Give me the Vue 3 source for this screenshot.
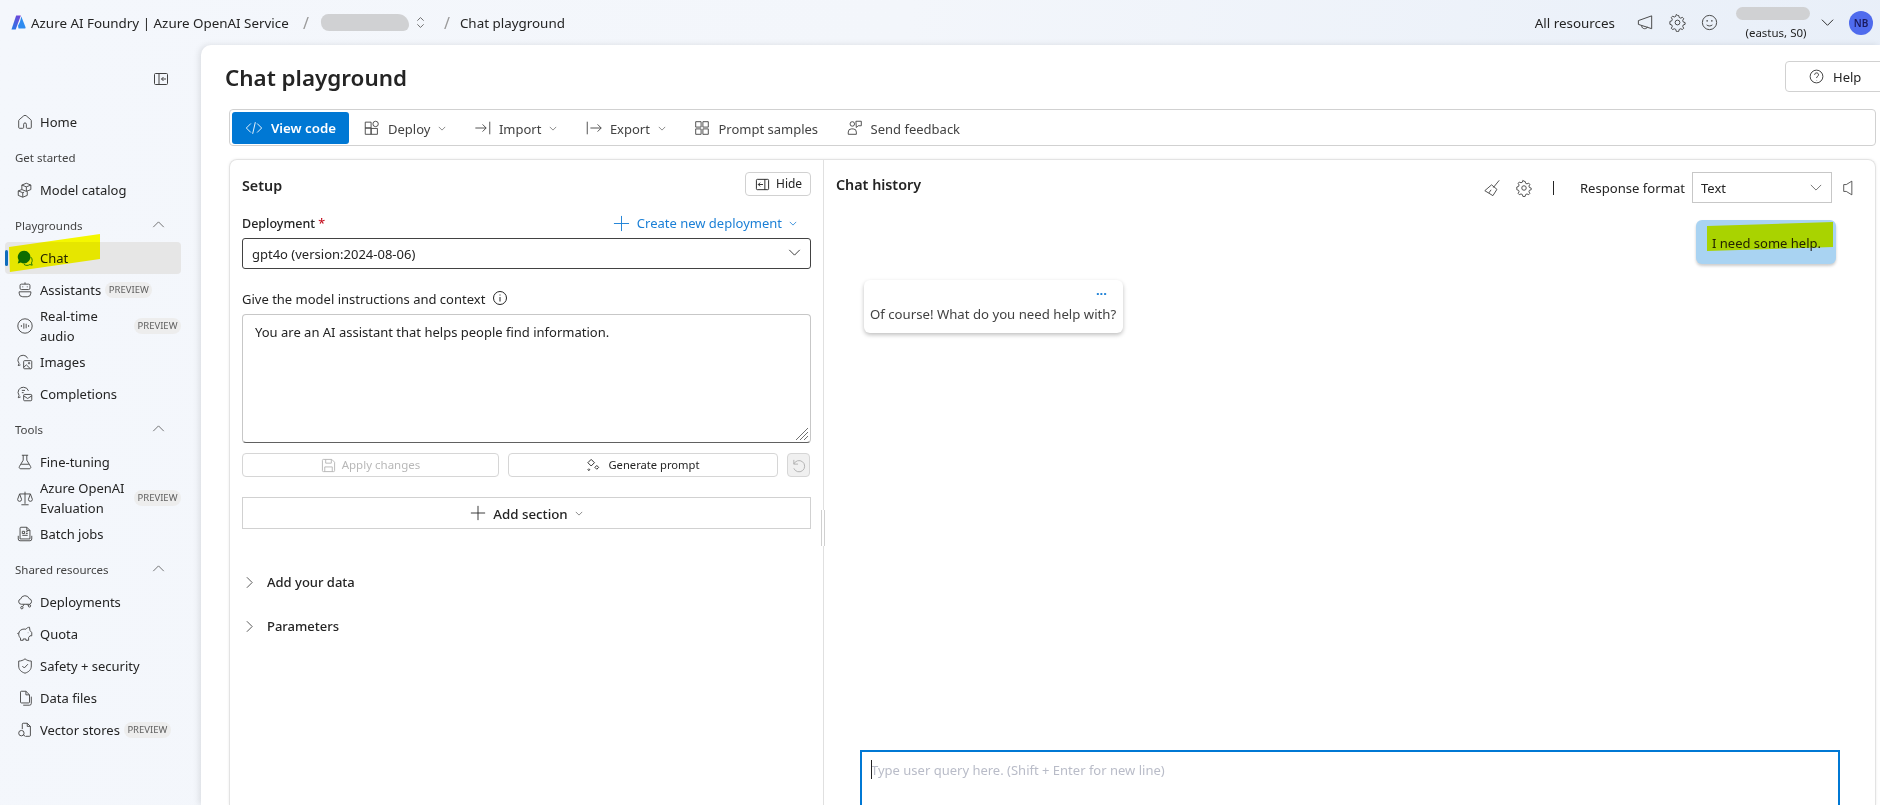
<script setup>
const icons = {
  home: ['M8.5 3.2a2.3 2.3 0 0 1 3 0l5 4.3c.3.3.5.7.5 1.1V16a1 1 0 0 1-1 1h-3.5a1 1 0 0 1-1-1v-3.5a1.5 1.5 0 0 0-3 0V16a1 1 0 0 1-1 1H4a1 1 0 0 1-1-1V8.6c0-.4.2-.8.5-1.1z'],
  catalog: ['M11.5 2.5l5 2v5l-5 2-5-2v-5z', 'M6.5 4.5l5 2 5-2', 'M11.5 6.5v5', 'M6.5 9.5l-4 1.5v5l5 2 5-2v-4.5', 'M2.5 11l5 2 1.5-.6', 'M7.5 13v5'],
  assistant: ['M6 3.5h8A1.5 1.5 0 0 1 15.5 5v3A1.5 1.5 0 0 1 14 9.5H6A1.5 1.5 0 0 1 4.5 8V5A1.5 1.5 0 0 1 6 3.5z', 'M10 1.5v2', 'M7.5 6v1', 'M12.5 6v1', 'M3.5 12h13v1.5a4 4 0 0 1-4 4h-5a4 4 0 0 1-4-4z'],
  audio: ['M10 2a8 8 0 1 0 0 16a8 8 0 0 0 0-16z', 'M6 9v2', 'M8.700 7v6', 'M11.300 7.500v5', 'M14 9v2'],
  images: ['M3.4 11.5A5.5 5.5 0 0 1 8 2.5a5.5 5.5 0 0 1 5 3.5', 'M3.4 11.5l-.9 2.5 2.5-.8', 'M9.5 8.5h7a1 1 0 0 1 1 1v7a1 1 0 0 1-1 1h-7a1 1 0 0 1-1-1v-7a1 1 0 0 1 1-1z', 'M14.5 10.5a.8.8 0 1 0 0 1.6a.8.8 0 1 0 0-1.6z', 'M8.5 16l3-2.8 4.5 4.3'],
  completions: ['M3.4 11.5A5.7 5.7 0 0 1 8.5 2.5a5.7 5.7 0 0 1 5.3 4', 'M3.4 11.5l-.9 2.6 2.6-.8', 'M6.5 6h3.5M6.5 8.5h2', 'M9.5 10.5h7a1 1 0 0 1 1 1v5a1 1 0 0 1-1 1h-7a1 1 0 0 1-1-1v-5a1 1 0 0 1 1-1z', 'M8.5 12l4.5 3 4.5-3'],
  flask: ['M6.5 2.5h7', 'M8 2.5v5.5l-4.200 7a1.600 1.600 0 0 0 1.400 2.500h9.600a1.600 1.600 0 0 0 1.400-2.500L12 8V2.500', 'M5.700 12.500h8.600'],
  scale: ['M10 3v13.500', 'M6 17.500h8', 'M4 5.500h12', 'M4 5.500l-2.200 6a2.200 2.200 0 0 0 4.400 0z', 'M16 5.500l-2.200 6a2.200 2.200 0 0 0 4.400 0z'],
  batch: ['M5.500 2.500h6.500l3.500 3.500v9.500h-11V3.500a1 1 0 0 1 1-1z', 'M12 2.500V6h3.500', 'M7 7h2.500v2.500H7z', 'M7 11.500h6M11 7.500h2M11 9.500h2', 'M2.500 12v3.500a2 2 0 0 0 2 2h11a2 2 0 0 0 2-2V12'],
  deploy: ['M6 12.500a3 3 0 0 1-.8-5.900a5 5 0 0 1 9.500-.3a3.200 3.200 0 0 1 .3 6.200z', 'M9 12.500l-1.500 2.500', 'M12 12.500l1.500 1.500', 'M6.500 15a1.300 1.300 0 1 0 0 2.600a1.300 1.300 0 1 0 0-2.600z', 'M15 13a1.300 1.300 0 1 0 0 2.600a1.300 1.300 0 1 0 0-2.600z'],
  piggy: ['M3 10c0-3.500 3-5.500 6-5.500l2 .2c1-1.500 2.500-2.200 4-2.200l.5 3.500 2 2.500v3.500h-2l-1.500 2V17h-3v-1.500H8V17H5v-2.500C3.800 13.500 3 12 3 10z', 'M13.500 8.500v.5', 'M1.500 10l1.500-1.500'],
  shield: ['M10 2c2 1.700 4.300 2.500 7 2.500V10c0 4-2.500 6.500-7 8c-4.500-1.500-7-4-7-8V4.500c2.700 0 5-.8 7-2.500z', 'M7 10l2.200 2.200 4-4.200'],
  file: ['M6 2.500h5l4 4V14.500a1 1 0 0 1-1 1H6a1 1 0 0 1-1-1V3.500a1 1 0 0 1 1-1z', 'M11 2.500v4h4', 'M17 8.500v7.500a2 2 0 0 1-2 2H8'],
  vector: ['M7 9V3.500a1 1 0 0 1 1-1h4.500L16 6v10a1 1 0 0 1-1 1h-4', 'M12.500 2.500V6H16', 'M6 10.500a3 3 0 1 0 0 6a3 3 0 1 0 0-6z', 'M8.200 15l2.300 2.500']
}

const groups = [
  { items: [{ label: 'Home', icon: 'home' }] },
  { head: 'Get started', items: [{ label: 'Model catalog', icon: 'catalog' }] },
  {
    head: 'Playgrounds', toggle: true,
    items: [
      { label: 'Chat', chat: true, active: true },
      { label: 'Assistants', icon: 'assistant', badge: true },
      { label: 'Real-time\naudio', icon: 'audio', badge: true, wrap: true },
      { label: 'Images', icon: 'images' },
      { label: 'Completions', icon: 'completions' }
    ]
  },
  {
    head: 'Tools', toggle: true,
    items: [
      { label: 'Fine-tuning', icon: 'flask' },
      { label: 'Azure OpenAI\nEvaluation', icon: 'scale', badge: true, wrap: true },
      { label: 'Batch jobs', icon: 'batch' }
    ]
  },
  {
    head: 'Shared resources', toggle: true,
    items: [
      { label: 'Deployments', icon: 'deploy' },
      { label: 'Quota', icon: 'piggy' },
      { label: 'Safety + security', icon: 'shield' },
      { label: 'Data files', icon: 'file' },
      { label: 'Vector stores', icon: 'vector', badge: true }
    ]
  }
]

const tools = [
  { label: 'Deploy', menu: true, d: ['M2.500 3.500h6.500v6.500H2.500z', 'M2.500 10h6.500v7H2.500z', 'M9 10.500h7v6.500H9z', 'M14 2.500a3 3 0 1 0 0 6a3 3 0 0 0 0-6z'] },
  { label: 'Import', menu: true, d: ['M1.500 10h12', 'M9.500 6l4 4-4 4', 'M17.500 3v14'] },
  { label: 'Export', menu: true, d: ['M2.500 3v14', 'M6 10h12', 'M14 6l4 4-4 4'] },
  { label: 'Prompt samples', d: ['M3 3h6v6H3z', 'M11 3h6v6h-6z', 'M3 11h6v6H3z', 'M11 11h6v6h-6z'] },
  { label: 'Send feedback', d: ['M7 8a2.500 2.500 0 1 0 0-5a2.500 2.500 0 0 0 0 5z', 'M2.500 17v-2.500A3.500 3.500 0 0 1 6 11h2a3.500 3.500 0 0 1 3.500 3.500V17z', 'M11 2.500h6v5h-3.500L11.500 9.500z'] }
]

const gear = 'M10 2.500l1.300.2.500 2 1.500.7 1.900-.8 1.300 1.400-1 1.800.5 1.600 2 .7v1.800l-2 .7-.5 1.600 1 1.800-1.300 1.400-1.900-.8-1.500.7-.5 2-1.300.2-1.300-.2-.5-2-1.500-.7-1.900.8-1.300-1.400 1-1.800-.5-1.600-2-.7V8.900l2-.7.500-1.600-1-1.800 1.300-1.400 1.900.8 1.500-.7.500-2z'
</script>

<template>
  <div class="shell">
    <header class="top">
      <svg class="logo" viewBox="0 0 16 18">
        <defs>
          <linearGradient id="lg" x1="0" y1="1" x2="1" y2="0">
            <stop offset="0" stop-color="#1f7fe8" />
            <stop offset="1" stop-color="#7a3fd6" />
          </linearGradient>
        </defs>
        <path d="M5.500 1.500h5L5 16.500H.5z" fill="url(#lg)" />
        <path d="M11 2.500l4.500 11.500c.2.700-.2 1.500-1 1.500H8l-.5-3 2-4z" fill="#2e8bf0" />
      </svg>
      <span class="brand">Azure AI Foundry | Azure OpenAI Service</span>
      <span class="slash first">/</span>
      <span class="blob"></span>
      <svg class="updown" viewBox="0 0 10 16"><path d="M1.500 6L5 2.500 8.500 6M1.500 10L5 13.500 8.500 10" /></svg>
      <span class="slash second">/</span>
      <span class="crumb">Chat playground</span>
      <span class="all">All resources</span>
      <svg class="topic mega" viewBox="0 0 20 20"><path d="M2.500 8l14-5v13.500L2.500 12z" /><path d="M6 13.500c0 2 1.500 3 3 3s2.500-.5 3-2" /></svg>
      <svg class="topic" viewBox="0 0 20 20"><path :d="gear" /><path d="M10 7.500a2.500 2.500 0 1 0 0 5a2.500 2.500 0 0 0 0-5z" /></svg>
      <svg class="topic" viewBox="0 0 20 20"><path d="M10 2.500a7.500 7.500 0 1 0 0 15a7.500 7.500 0 0 0 0-15z" /><path d="M7 12.500c1.500 1.500 4.500 1.500 6 0" /><path d="M7.500 8v.5M12.500 8v.5" stroke-linecap="round" stroke-width="1.500" /></svg>
      <div class="account">
        <span class="acc-blob"></span>
        <span class="acc-sub">(eastus, S0)</span>
      </div>
      <svg class="acc-chev" viewBox="0 0 16 16"><path d="M2 5l6 6 6-6" /></svg>
      <span class="avatar">NB</span>
    </header>

    <div class="body">
      <nav class="side">
        <div class="collapse-row">
          <svg class="collapse" viewBox="0 0 16 16"><path d="M2.500 2.500h11a1 1 0 0 1 1 1v9a1 1 0 0 1-1 1h-11a1 1 0 0 1-1-1v-9a1 1 0 0 1 1-1z" /><path d="M6 2.500v11" /><path d="M13 8H8.500M10.500 6L8.500 8l2 2" /></svg>
        </div>
        <section v-for="(g, gi) in groups" :key="gi">
          <div v-if="g.head" class="head">
            <span>{{ g.head }}</span>
            <svg v-if="g.toggle" class="head-chev" viewBox="0 0 14 8"><path d="M1 7l6-6 6 6" /></svg>
          </div>
          <div v-for="it in g.items" :key="it.label" class="row" :class="{ active: it.active, tall: it.wrap }">
            <span v-if="it.active" class="mark"></span>
            <svg v-if="it.chat" class="nav-ic" viewBox="0 0 20 20">
              <path class="chat-fill" d="M9 2a7 7 0 0 0-6 10.600L2 16l3.400-1A7 7 0 1 0 9 2z" />
              <path class="chat-line" d="M16.500 9c1 1 1.500 2.300 1.500 3.700 0 1-.3 2-.8 2.800l.8 2.500-2.600-.7c-1 .6-2 .9-3.200.9-1.300 0-2.500-.4-3.400-1.200" />
            </svg>
            <svg v-else class="nav-ic" viewBox="0 0 20 20"><path v-for="d in icons[it.icon]" :key="d" :d="d" /></svg>
            <span class="label" :class="{ grow: it.wrap }">{{ it.label }}</span>
            <span v-if="it.badge" class="badge">PREVIEW</span>
            <span v-if="it.active" class="mark-yellow"></span>
          </div>
        </section>
      </nav>

      <main class="main">
        <div class="title-row">
          <h1>Chat playground</h1>
          <button class="help">
            <svg viewBox="0 0 20 20"><path d="M10 2.500a7.500 7.500 0 1 0 0 15a7.500 7.500 0 0 0 0-15z" /><path d="M7.800 8c0-3 4.600-3 4.600 0 0 1.700-2.300 1.800-2.300 3.800" /><path d="M10.100 14v.5" stroke-width="1.500" /></svg>
            <span class="nudge">Help</span>
          </button>
        </div>

        <div class="toolbar">
          <button class="primary">
            <svg viewBox="0 0 20 20"><path d="M6.500 5L1.500 10l5 5" /><path d="M13.500 5l5 5-5 5" /><path d="M11.500 3.500l-3 13" /></svg>
            <span class="nudge">View code</span>
          </button>
          <div v-for="t in tools" :key="t.label" class="tool">
            <svg class="tool-ic" viewBox="0 0 20 20"><path v-for="d in t.d" :key="d" :d="d" /></svg>
            <span class="nudge">{{ t.label }}</span>
            <svg v-if="t.menu" class="mini" viewBox="0 0 10 6"><path d="M1 1l4 4 4-4" /></svg>
          </div>
        </div>

        <div class="card">
          <section class="setup">
            <div class="setup-head">
              <h2>Setup</h2>
              <button class="hide">
                <svg viewBox="0 0 16 16"><path d="M2.500 2.500h11a1 1 0 0 1 1 1v9a1 1 0 0 1-1 1h-11a1 1 0 0 1-1-1v-9a1 1 0 0 1 1-1z" /><path d="M10.500 2.500v11" /><path d="M8.500 8H3.500M5.500 6L3.500 8l2 2" /></svg>
                <span>Hide</span>
              </button>
            </div>

            <div class="dep-row">
              <label class="dep-label nudge">Deployment <em>*</em></label>
              <div class="create">
                <svg class="create-plus" viewBox="0 0 18 18"><path d="M9 1v16M1 9h16" /></svg>
                <span>Create new deployment</span>
                <svg class="mini" viewBox="0 0 10 6"><path d="M1 1l4 4 4-4" /></svg>
              </div>
            </div>
            <div class="select">
              <span>gpt4o (version:2024-08-06)</span>
              <svg viewBox="0 0 14 8"><path d="M1 1l6 6 6-6" /></svg>
            </div>

            <div class="give">
              <span>Give the model instructions and context</span>
              <svg viewBox="0 0 16 16"><path d="M8 1.500a6.500 6.500 0 1 0 0 13a6.500 6.500 0 0 0 0-13z" /><path d="M8 7v4.500M8 4.500v1" /></svg>
            </div>
            <div class="prompt">
              <span>You are an AI assistant that helps people find information.</span>
              <svg class="grip" viewBox="0 0 14 14"><path d="M1 13L13 1M5 13l8-8M9 13l4-4" /></svg>
            </div>

            <div class="actions">
              <button class="apply">
                <svg viewBox="0 0 16 16"><path d="M2.500 1.500h9l3 3v9a1 1 0 0 1-1 1h-11a1 1 0 0 1-1-1v-11a1 1 0 0 1 1-1z" /><path d="M5 1.500v4h6v-4M4 14.500V9.500h8v5" /></svg>
                <span>Apply changes</span>
              </button>
              <button class="generate">
                <svg viewBox="0 0 16 16"><path d="M5.500 1.500l3.500 3.500-3.500 3.500L2 5z" /><path d="M11.500 8l2 2-2 2-2-2z" /><path d="M3 11.500l1 1-1 1-1-1z" /></svg>
                <span>Generate prompt</span>
              </button>
              <button class="undo">
                <svg viewBox="0 0 16 16"><path d="M3 2v4.500h4.500" /><path d="M3 6.500A6 6 0 1 1 3 11" /></svg>
              </button>
            </div>

            <button class="add">
              <svg class="add-plus" viewBox="0 0 18 18"><path d="M9 1v16M1 9h16" /></svg>
              <span>Add section</span>
              <svg class="mini" viewBox="0 0 10 6"><path d="M1 1l4 4 4-4" /></svg>
            </button>

            <div class="fold first-fold">
              <svg viewBox="0 0 8 14"><path d="M1 1l6 6-6 6" /></svg>
              <span>Add your data</span>
            </div>
            <div class="fold">
              <svg viewBox="0 0 8 14"><path d="M1 1l6 6-6 6" /></svg>
              <span>Parameters</span>
            </div>
            <span class="splitter"></span>
          </section>

          <section class="chat">
            <div class="chat-head">
              <h2>Chat history</h2>
              <svg class="head-ic broom" viewBox="0 0 20 20"><path d="M18 1.500l-6.500 8" /><path d="M9.500 6.500l6 5-4.500 7L2 13z" /><path d="M6.500 15.500l2.500-3.500" /></svg>
              <svg class="head-ic" viewBox="0 0 20 20"><path :d="gear" /><path d="M10 7.500a2.500 2.500 0 1 0 0 5a2.500 2.500 0 0 0 0-5z" /></svg>
              <span class="vbar"></span>
              <span class="rf nudge">Response format</span>
              <div class="fmt">
                <span class="nudge">Text</span>
                <svg viewBox="0 0 14 8"><path d="M1 1l6 6 6-6" /></svg>
              </div>
              <svg class="head-ic speaker" viewBox="0 0 14 20"><path d="M11.500 2v16L5 14H2V6h3z" /></svg>
            </div>

            <div class="user-msg">
              <span>I need some help.</span>
              <span class="mark-green"></span>
            </div>
            <div class="bot-msg">
              <span class="dots">...</span>
              <span>Of course! What do you need help with?</span>
            </div>

            <div class="input">
              <span class="caret"></span>
              <span class="ph">Type user query here. (Shift + Enter for new line)</span>
            </div>
          </section>
        </div>
      </main>
    </div>
  </div>
</template>

<style>
html, body { margin: 0; overflow: hidden; }
</style>

<style scoped>
.shell {
  width: 1880px;
  height: 805px;
  overflow: hidden;
  display: flex;
  flex-direction: column;
  color: #242424;
  font: 13px/20px "Noto Sans", "Open Sans", sans-serif;
  background: linear-gradient(100deg, #f4f7fc 0%, #f3f6fb 45%, #e7eef8 100%);
}
button { font: inherit; color: inherit; background: #fff; cursor: pointer; padding: 0; }
svg { fill: none; stroke: currentColor; stroke-width: 1; display: block; flex: none; }
h1, h2 { margin: 0; }
.nudge { margin-top: 1px; }

.top { height: 45px; flex: none; display: flex; align-items: center; font-size: 13.400px; }
.logo { width: 15px; height: 17px; margin-left: 11px; stroke: none; }
.logo path { stroke: none; }
.brand { margin-left: 5px; width: 258px; white-space: nowrap; }
.slash { color: #9a9a9a; font-size: 16px; }
.slash.first { margin-left: 14px; }
.blob { width: 88px; height: 17px; margin-left: 12px; border-radius: 9px 14px 7px 10px; background: #d0d1d3; }
.updown { width: 9px; height: 15px; margin-left: 7px; color: #616161; }
.slash.second { margin-left: 19px; }
.crumb { margin-left: 10px; white-space: nowrap; }
.all { margin-left: auto; white-space: nowrap; }
.topic { width: 19px; height: 19px; margin-left: 13px; color: #424242; }
.topic.mega { margin-left: 21px; }
.account { width: 80px; margin-left: 14px; display: flex; flex-direction: column; align-items: center; height: 36px; justify-content: flex-start; }
.acc-blob { width: 74px; height: 14px; border-radius: 7px; background: #d0d1d3; margin-top: 2px; }
.acc-sub { font-size: 11.500px; line-height: 16px; margin-top: 5px; white-space: nowrap; margin-left: 6px; }
.acc-chev { width: 15px; height: 15px; margin-left: 7px; color: #242424; }
.avatar { width: 24px; height: 24px; border-radius: 50%; margin-left: 14px; margin-right: 7px; background: #4f6bed; color: #1a1a5e; font-size: 10px; font-weight: 600; display: flex; align-items: center; justify-content: center; }

.body { flex: 1; min-height: 0; display: flex; }
.side { width: 201px; flex: none; }
.collapse-row { height: 61px; display: flex; justify-content: flex-end; align-items: flex-end; padding-right: 32px; box-sizing: border-box; }
.collapse { width: 16px; height: 16px; margin-bottom: 19px; color: #424242; }
.head { height: 36px; padding: 4px 36px 0 15px; box-sizing: border-box; display: flex; align-items: center; justify-content: space-between; font-size: 11.500px; color: #424242; }
.head-chev { width: 13px; height: 7px; color: #616161; margin-top: -3px; margin-right: 0; }
.row { position: relative; height: 32px; width: 176px; margin-left: 5px; padding-left: 11px; box-sizing: border-box; display: flex; align-items: center; gap: 6px; }
.row.tall { height: 40px; }
.row.active { background: #e6e6e6; border-radius: 4px; }
.mark { position: absolute; left: 0; top: 8px; width: 3px; height: 16px; background: #0f6cbd; border-radius: 2px; }
.nav-ic { width: 18px; height: 18px; color: #424242; }
.chat-fill { fill: #0f6cbd; stroke: none; }
.chat-line { stroke: #0f6cbd; }
.label { white-space: pre-line; line-height: 20px; }
.label.grow { flex: 1; }
.badge { flex: none; height: 16px; width: 47px; margin-left: -2px; border-radius: 8px; background: #ededed; color: #616161; font-size: 9.500px; line-height: 16px; text-align: center; }
.mark-yellow { position: absolute; left: 4px; top: -8px; width: 91px; height: 38px; background: #ffff00; mix-blend-mode: multiply; clip-path: polygon(0 34%, 100% 0, 100% 66%, 1% 100%); }

.main { flex: 1; min-width: 0; background: #fff; border-top-left-radius: 10px; box-shadow: -2px 0 6px rgba(0, 0, 0, .1); padding: 0 4px 0 24px; display: flex; flex-direction: column; overflow: hidden; }
.title-row { height: 64px; flex: none; display: flex; align-items: flex-start; justify-content: space-between; box-sizing: border-box; padding-top: 16px; }
h1 { font-size: 22.400px; font-weight: 600; line-height: 34px; margin-top: 0; white-space: nowrap; }
.help { width: 100px; height: 31px; margin-right: -9px; border: 1px solid #d1d1d1; border-radius: 4px; display: flex; align-items: center; gap: 8px; padding-left: 22px; flex: none; box-sizing: border-box; }
.help svg { width: 17px; height: 17px; }
.toolbar { height: 37px; flex: none; margin-left: 4px; border: 1px solid #d1d1d1; border-radius: 4px; box-sizing: border-box; display: flex; align-items: center; padding-left: 2px; }
.primary { width: 117px; height: 32px; border: none; border-radius: 3px; background: #0078d4; color: #fff; font-weight: 600; font-size: 13.300px; display: flex; align-items: center; justify-content: center; gap: 8px; }
.primary svg { width: 18px; height: 18px; }
.tool { display: flex; align-items: center; gap: 7px; padding: 1px 13.500px 0 14px; white-space: nowrap; color: #424242; }
.tool-ic { width: 18px; height: 18px; }
.mini { width: 8px; height: 5px; color: #707070; }
.tool .mini { margin-left: 1px; }

.card { flex: 1; min-height: 0; margin: 13px 0 0 4px; border: 1px solid #e3e3e3; border-bottom: none; border-radius: 8px 8px 0 0; display: flex; box-shadow: 0 0 3px rgba(0, 0, 0, .08); }
.setup { position: relative; width: 594px; flex: none; box-sizing: border-box; padding: 12px 12px 0 12px; border-right: 1px solid #e0e0e0; }
.setup-head { display: flex; justify-content: space-between; align-items: center; height: 24px; }
h2 { font-size: 14.300px; font-weight: 600; line-height: 24px; white-space: nowrap; }
.setup-head h2 { margin-top: 4px; }
.hide { width: 66px; height: 24px; border: 1px solid #d1d1d1; border-radius: 4px; display: flex; align-items: center; gap: 6px; padding-left: 9px; box-sizing: border-box; font-size: 12px; }
.hide svg { width: 15px; height: 15px; }
.dep-row { display: flex; justify-content: space-between; align-items: center; height: 42px; padding-top: 12px; box-sizing: border-box; }
.dep-label { font-weight: 500; font-size: 12.500px; }
.dep-label em { color: #c50f1f; font-style: normal; }
.create { display: flex; align-items: center; color: #1a7fd6; margin-right: 14px; }
.create-plus { width: 17px; height: 17px; margin-right: 7px; }
.create .mini { margin-left: 7px; color: #1a7fd6; }
.select { height: 31px; border: 1px solid #424242; border-radius: 3px; box-sizing: border-box; display: flex; align-items: center; justify-content: space-between; padding: 0 9px; }
.select svg { width: 13px; height: 7px; margin-top: -2px; color: #242424; }
.give { display: flex; align-items: center; gap: 7px; height: 45px; padding-top: 15px; box-sizing: border-box; }
.give svg { width: 16px; height: 16px; margin-top: -2px; color: #242424; }
.prompt { position: relative; height: 129px; border: 1px solid #c7c7c7; border-bottom-color: #616161; border-radius: 4px; box-sizing: border-box; padding: 7px 12px; }
.grip { position: absolute; right: 1px; bottom: 1px; width: 14px; height: 14px; color: #707070; }
.actions { display: flex; gap: 9px; margin-top: 10px; height: 24px; }
.actions button { height: 24px; border: 1px solid #d6d6d6; border-radius: 4px; box-sizing: border-box; display: flex; align-items: center; justify-content: center; gap: 6px; font-size: 11.500px; }
.apply { width: 257px; color: #b8b8b8; }
.actions .generate { width: 270px; font-size: 11.200px; gap: 7px; }
.undo { width: 23px; background: #f0f0f0; color: #b0b0b0; }
.actions svg { width: 15px; height: 15px; }
.add { width: 100%; height: 32px; margin-top: 20px; border: 1px solid #d1d1d1; border-radius: 0; display: flex; align-items: center; justify-content: center; gap: 7px; font-weight: 500; font-size: 13.300px; }
.add span { margin-top: 1px; }
.add-plus { width: 16px; height: 16px; }
.fold { display: flex; align-items: center; height: 44px; padding-left: 4px; gap: 14px; font-weight: 500; }
.fold svg { width: 7px; height: 13px; color: #424242; }
.first-fold { margin-top: 31px; }
.splitter { position: absolute; right: -2px; top: 350px; width: 4px; height: 36px; border-left: 1px solid #d0d0d0; border-right: 1px solid #d0d0d0; box-sizing: border-box; background: #fff; }

.chat { flex: 1; min-width: 0; display: flex; flex-direction: column; padding: 12px 0 0 12px; }
.chat-head { display: flex; align-items: center; height: 31px; flex: none; }
.chat-head h2 { margin-right: auto; margin-top: -5px; }
.head-ic { width: 18px; height: 18px; color: #424242; }
.broom { margin-right: 14px; }
.vbar { width: 1px; height: 14px; background: #242424; margin: 0 26px 0 20px; }
.rf { white-space: nowrap; font-size: 13.100px; }
.fmt { width: 140px; height: 31px; margin-left: 7px; border: 1px solid #c7c7c7; box-sizing: border-box; display: flex; align-items: center; justify-content: space-between; padding: 0 9px 0 8px; }
.fmt svg { width: 12px; height: 7px; color: #616161; }
.speaker { margin: 0 21px 0 10px; width: 12px; }
.user-msg { position: relative; align-self: flex-end; margin: 17px 39px 0 0; width: 140px; height: 44px; box-sizing: border-box; padding: 13px 0 0 16px; background: #a9d3f2; border-radius: 6px; box-shadow: 0 2px 3px rgba(0, 0, 0, .2); white-space: nowrap; }
.mark-green { position: absolute; left: 11px; top: 2px; width: 126px; height: 29px; background: #ffff00; mix-blend-mode: multiply; clip-path: polygon(0 14%, 100% 0, 100% 86%, 0 100%); }
.bot-msg { align-self: flex-start; margin: 16px 0 0 28px; width: 259px; height: 53px; box-sizing: border-box; padding: 2px 6px 0; display: flex; flex-direction: column; border-radius: 6px; box-shadow: 0 2px 4px rgba(0, 0, 0, .25); white-space: nowrap; color: #424242; font-size: 13.200px; }
.dots { align-self: flex-end; color: #1a7fd6; font-weight: 700; line-height: 16px; height: 22px; margin-right: 10px; }
.input { position: relative; margin: auto 0 0 24px; width: 980px; height: 90px; flex: none; border: 2px solid #0078d4; box-sizing: border-box; padding: 8px 9px; margin-bottom: -35px; }
.caret { position: absolute; left: 9px; top: 8px; width: 1px; height: 19px; background: #242424; }
.ph { color: #b9bcc8; white-space: nowrap; }
</style>
